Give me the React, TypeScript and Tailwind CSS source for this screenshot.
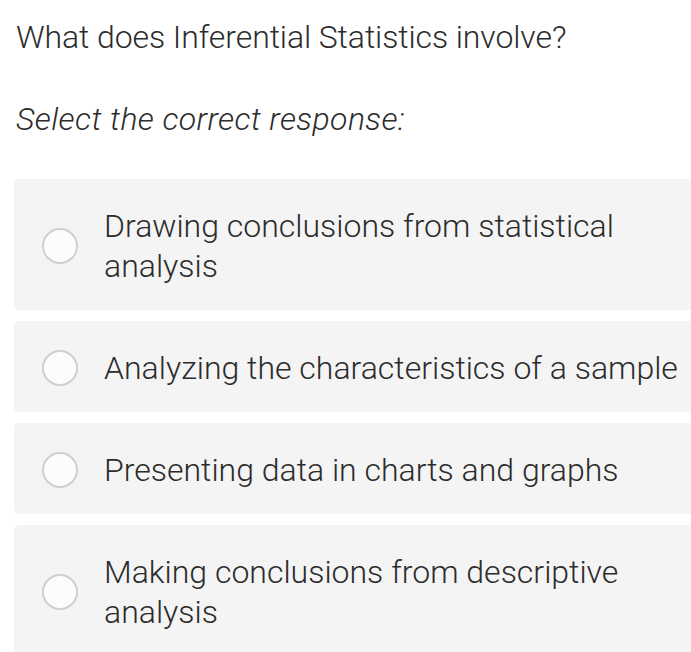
const options = [
  "Drawing conclusions from statistical analysis",
  "Analyzing the characteristics of a sample",
  "Presenting data in charts and graphs",
  "Making conclusions from descriptive analysis",
];

export default function App() {
  return (
    <div className="min-h-screen bg-white text-[#2c2c2c] font-['Roboto',sans-serif] font-light">
      <div className="pl-[16px] pt-[15px]">
        <h1 className="text-[32px] leading-[44px] font-light tracking-[-0.1px]">
          What does Inferential Statistics involve?
        </h1>
        <p className="mt-[38px] text-[32px] leading-[44px] italic tracking-[0.4px]">
          Select the correct response:
        </p>
      </div>
      <div className="mt-[38px] flex flex-col gap-[11px] pl-[14px]">
        {options.map((o) => (
          <div
            key={o}
            className="flex items-center rounded-l-[5px] bg-[#f4f4f4] pl-[28px] pr-[4px] pt-[27px] pb-[24px]"
          >
            <span className="h-[36px] w-[36px] shrink-0 rounded-full border-2 border-[#cfcfcf] bg-[#fcfcfc]" />
            <span className="ml-[26px] text-[32px] leading-[40px] tracking-[0px]">
              {o}
            </span>
          </div>
        ))}
      </div>
    </div>
  );
}
